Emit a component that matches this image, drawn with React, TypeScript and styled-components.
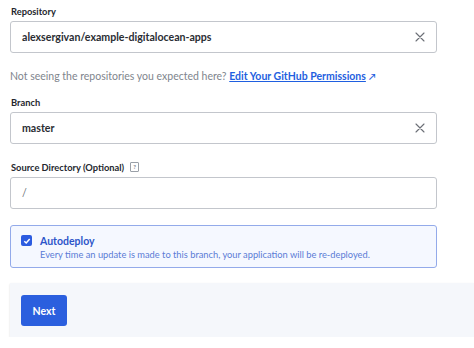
import * as React from 'react'
import styled, { createGlobalStyle } from 'styled-components'

const GlobalStyle = createGlobalStyle`
  html, body {
    margin: 0;
    padding: 0;
    background: #ffffff;
  }
  body {
    font-family: Lato, "Liberation Sans", sans-serif;
    -webkit-font-smoothing: antialiased;
  }
`

const Page = styled.div`
  padding: 4px 0 0 10px;
  width: 464px;
`

const Form = styled.div`
  width: 427px;
  display: flex;
  flex-direction: column;
`

const Field = styled.div<{ $gap?: number }>`
  display: flex;
  flex-direction: column;
  margin-top: ${p => p.$gap ?? 0}px;
`

const Label = styled.label`
  display: flex;
  align-items: center;
  gap: 6px;
  height: 14px;
  padding-left: 1px;
  font-size: 9.3px;
  font-weight: 700;
  color: #24272e;
  margin-bottom: 3px;
`

const HelpBox = styled.span`
  display: inline-flex;
  align-items: center;
  justify-content: center;
  width: 7px;
  height: 8px;
  border: 1px solid #9aa0a8;
  border-radius: 1px;
  font-size: 6px;
  font-weight: 700;
  color: #7a8089;
  line-height: 1;
`

const InputBox = styled.div`
  box-sizing: border-box;
  height: 32px;
  display: flex;
  align-items: center;
  justify-content: space-between;
  padding: 0 10px 0 11px;
  border: 1px solid #c3c6cc;
  border-radius: 3px;
  background: #fff;
`

const Value = styled.span<{ $muted?: boolean }>`
  font-size: 10.6px;
  font-weight: ${p => (p.$muted ? 400 : 700)};
  color: ${p => (p.$muted ? '#6b7078' : '#2a2d33')};
`

const Clear = styled.button`
  border: 0;
  background: none;
  padding: 0;
  width: 12px;
  height: 12px;
  display: flex;
  align-items: center;
  justify-content: center;
  cursor: pointer;
`

const Hint = styled.p`
  margin: 15px 0 0;
  height: 16px;
  line-height: 16px;
  font-size: 10.5px;
  color: #80858d;
`

const Link = styled.a`
  color: #1f5fe0;
  font-weight: 700;
  text-decoration: underline;
  text-underline-offset: 1px;
`

const Arrow = styled.span`
  color: #1f5fe0;
  font-size: 9px;
  font-weight: 700;
  margin-left: 3px;
`

const AutoBox = styled.label`
  box-sizing: border-box;
  margin-top: 16px;
  height: 43px;
  display: flex;
  align-items: flex-start;
  gap: 8px;
  padding: 8px 10px;
  background: #f5f8ff;
  border: 1px solid #93aaea;
  border-radius: 3px;
`

const Check = styled.span`
  flex: none;
  width: 11px;
  height: 11px;
  margin-top: 1px;
  border-radius: 2px;
  background: #2c5ce0;
  display: flex;
  align-items: center;
  justify-content: center;
`

const AutoText = styled.div`
  display: flex;
  flex-direction: column;
`

const AutoTitle = styled.span`
  font-size: 10.5px;
  font-weight: 700;
  color: #2d55c9;
  line-height: 14px;
`

const AutoDesc = styled.span`
  font-size: 9.3px;
  color: #5b7cd6;
  line-height: 13px;
`

const Footer = styled.div`
  margin-top: 15px;
  height: 54px;
  box-sizing: border-box;
  padding: 12px 0 0 11px;
  background: #f5f7fb;
  box-shadow: 0 1px 2px rgba(0, 0, 0, 0.14);
`

const NextButton = styled.button`
  width: 46px;
  height: 31px;
  border: 0;
  border-radius: 3px;
  background: #2b5fde;
  color: #fff;
  font-family: inherit;
  font-size: 10.5px;
  font-weight: 700;
  cursor: pointer;
`

const ClearIcon = () => (
  <svg width="10" height="10" viewBox="0 0 10 10">
    <path d="M1 1L9 9M9 1L1 9" stroke="#6b6f76" strokeWidth="1.1" strokeLinecap="round" />
  </svg>
)

const SelectField = ({ label, value, gap }: { label: string; value: string; gap?: number }) => (
  <Field $gap={gap}>
    <Label>{label}</Label>
    <InputBox>
      <Value>{value}</Value>
      <Clear aria-label="Clear">
        <ClearIcon />
      </Clear>
    </InputBox>
  </Field>
)

export default function App() {
  return (
    <Page>
      <GlobalStyle />
      <Form>
        <SelectField label="Repository" value="alexsergivan/example-digitalocean-apps" />
        <Hint>
          Not seeing the repositories you expected here?{' '}
          <Link href="#">Edit Your GitHub Permissions</Link>
          <Arrow>↗</Arrow>
        </Hint>
        <SelectField label="Branch" value="master" gap={11} />
        <Field $gap={16}>
          <Label>
            Source Directory (Optional)
            <HelpBox>?</HelpBox>
          </Label>
          <InputBox>
            <Value $muted>/</Value>
          </InputBox>
        </Field>
        <AutoBox>
          <Check>
            <svg width="8" height="8" viewBox="0 0 8 8">
              <path d="M1.3 4.2L3.2 6L6.7 2" stroke="#fff" strokeWidth="1.5" fill="none" />
            </svg>
          </Check>
          <AutoText>
            <AutoTitle>Autodeploy</AutoTitle>
            <AutoDesc>Every time an update is made to this branch, your application will be re-deployed.</AutoDesc>
          </AutoText>
        </AutoBox>
      </Form>
      <Footer>
        <NextButton>Next</NextButton>
      </Footer>
    </Page>
  )
}
